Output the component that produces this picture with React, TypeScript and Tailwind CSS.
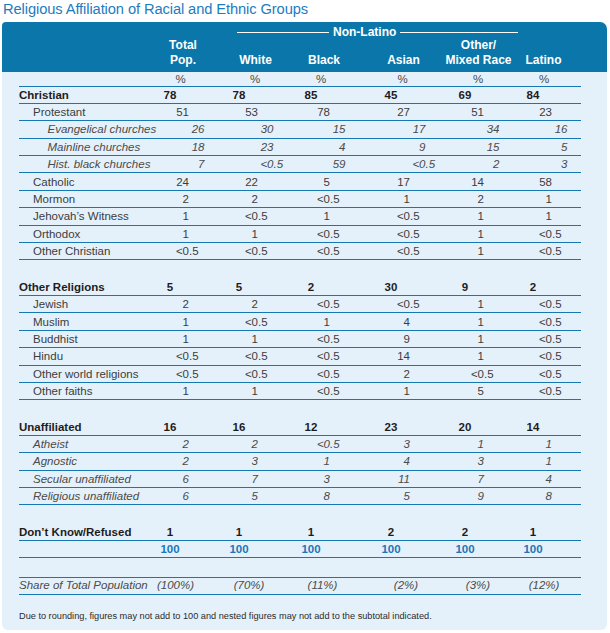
import React from "react";

type Kind = "section" | "sub" | "subItal" | "ital" | "total" | "gap";

type Row = {
  label?: string;
  kind: Kind;
  values?: string[];
};

const rows: Row[] = [
  { label: "Christian", kind: "section", values: ["78", "78", "85", "45", "69", "84"] },
  { label: "Protestant", kind: "sub", values: ["51", "53", "78", "27", "51", "23"] },
  { label: "Evangelical churches", kind: "subItal", values: ["26", "30", "15", "17", "34", "16"] },
  { label: "Mainline churches", kind: "subItal", values: ["18", "23", "4", "9", "15", "5"] },
  { label: "Hist. black churches", kind: "subItal", values: ["7", "<0.5", "59", "<0.5", "2", "3"] },
  { label: "Catholic", kind: "sub", values: ["24", "22", "5", "17", "14", "58"] },
  { label: "Mormon", kind: "sub", values: ["2", "2", "<0.5", "1", "2", "1"] },
  { label: "Jehovah’s Witness", kind: "sub", values: ["1", "<0.5", "1", "<0.5", "1", "1"] },
  { label: "Orthodox", kind: "sub", values: ["1", "1", "<0.5", "<0.5", "1", "<0.5"] },
  { label: "Other Christian", kind: "sub", values: ["<0.5", "<0.5", "<0.5", "<0.5", "1", "<0.5"] },
  { kind: "gap" },
  { label: "Other Religions", kind: "section", values: ["5", "5", "2", "30", "9", "2"] },
  { label: "Jewish", kind: "sub", values: ["2", "2", "<0.5", "<0.5", "1", "<0.5"] },
  { label: "Muslim", kind: "sub", values: ["1", "<0.5", "1", "4", "1", "<0.5"] },
  { label: "Buddhist", kind: "sub", values: ["1", "1", "<0.5", "9", "1", "<0.5"] },
  { label: "Hindu", kind: "sub", values: ["<0.5", "<0.5", "<0.5", "14", "1", "<0.5"] },
  { label: "Other world religions", kind: "sub", values: ["<0.5", "<0.5", "<0.5", "2", "<0.5", "<0.5"] },
  { label: "Other faiths", kind: "sub", values: ["1", "1", "<0.5", "1", "5", "<0.5"] },
  { kind: "gap" },
  { label: "Unaffiliated", kind: "section", values: ["16", "16", "12", "23", "20", "14"] },
  { label: "Atheist", kind: "ital", values: ["2", "2", "<0.5", "3", "1", "1"] },
  { label: "Agnostic", kind: "ital", values: ["2", "3", "1", "4", "3", "1"] },
  { label: "Secular unaffiliated", kind: "ital", values: ["6", "7", "3", "11", "7", "4"] },
  { label: "Religious unaffiliated", kind: "ital", values: ["6", "5", "8", "5", "9", "8"] },
  { kind: "gap" },
  { label: "Don’t Know/Refused", kind: "section", values: ["1", "1", "1", "2", "2", "1"] },
  { kind: "total", values: ["100", "100", "100", "100", "100", "100"] },
  { kind: "gap" },
];

const headers = [
  ["Total", "Pop."],
  ["White"],
  ["Black"],
  ["Asian"],
  ["Other/", "Mixed Race"],
  ["Latino"],
];

const shares = ["(100%)", "(70%)", "(11%)", "(2%)", "(3%)", "(12%)"];

// column cells, left edge sits 20px before the bold-number centre
const colW = ["w-[69px]", "w-[72px]", "w-[80px]", "w-[74px]", "w-[68px]", "w-[68px]"];
const headW = ["w-[66px]", "w-[73px]", "w-[66px]", "w-[65px]", "w-[67px]", "w-[61px]"];
const pctW = ["w-[61px]", "w-[72px]", "w-[60px]", "w-[63px]", "w-[66px]", "w-[62px]"];
const shareW = ["w-[51px]", "w-[60px]", "w-[63px]", "w-[70px]", "w-[66px]", "w-[62px]"];

const Decimal = ({ value, wide }: { value: string; wide?: boolean }) => {
  const dot = value.indexOf(".");
  const whole = dot === -1 ? value : value.slice(0, dot);
  const frac = dot === -1 ? "" : value.slice(dot);
  return (
    <div className="flex">
      <span className={`${wide ? "w-[54.5px]" : "w-[39px]"} shrink-0 text-right`}>{whole}</span>
      <span>{frac}</span>
    </div>
  );
};

const Cell = ({ kind, value }: { kind: Kind; value: string }) => {
  if (kind === "section") {
    return <div className="w-[40px] text-center font-bold text-[#1f1c1d]">{value}</div>;
  }
  if (kind === "total") {
    return <div className="w-[40px] text-center font-bold text-[#1a76b9]">{value}</div>;
  }
  if (kind === "subItal") {
    return (
      <div className="italic text-[#4a4a4a]">
        <Decimal value={value} wide />
      </div>
    );
  }
  if (kind === "ital") {
    return (
      <div className="italic text-[#4a4a4a]">
        <Decimal value={value} />
      </div>
    );
  }
  return (
    <div className="text-[#3c3c3c]">
      <Decimal value={value} />
    </div>
  );
};

const TableRow = ({ row }: { row: Row }) => {
  if (row.kind === "gap") return <div className="h-[18.2px]" />;

  let labelCls = "pl-[14px] text-[#3c3c3c]";
  if (row.kind === "section") labelCls = "font-bold text-[#1f1c1d]";
  if (row.kind === "subItal") labelCls = "pl-[28.5px] italic text-[#4a4a4a]";
  if (row.kind === "ital") labelCls = "pl-[14px] italic text-[#4a4a4a]";

  return (
    <div className="flex h-[17.4px] items-center border-b border-[#1677b3] pt-[1.5px]">
      <div className={`w-[131px] shrink-0 whitespace-nowrap ${labelCls}`}>{row.label}</div>
      {row.values?.map((v, i) => (
        <div key={i} className={`${colW[i]} shrink-0 whitespace-nowrap`}>
          <Cell kind={row.kind} value={v} />
        </div>
      ))}
    </div>
  );
};

const App: React.FC = () => {
  return (
    <div className="min-h-screen bg-white pl-[2px] font-['Liberation_Sans',Arial,sans-serif]">
      <h1 className="mb-[4px] pl-px text-[14.7px] leading-[18px] tracking-[-0.1px] text-[#1c7cbf]">
        Religious Affiliation of Racial and Ethnic Groups
      </h1>

      <div className="w-[605px] overflow-hidden rounded-tl-[4px] rounded-tr-[7px] rounded-b-[6px] bg-[#e5f1fa]">
        <div className="bg-[#0a76aa] pt-[4px] pb-[4px] pl-[17px] text-[12px] font-bold text-white">
          <div className="ml-[218px] flex h-[12px] items-center leading-none">
            <div className="h-px w-[92px] bg-white" />
            <span className="px-[4px]">Non-Latino</span>
            <div className="h-px w-[118px] bg-white" />
          </div>
          <div className="flex h-[30px] leading-[15px]">
            <div className="w-[131px] shrink-0" />
            {headers.map((h, i) => (
              <div key={i} className={`${colW[i]} flex shrink-0 flex-col justify-end`}>
                {h.map((line) => (
                  <div key={line} className={`${headW[i]} whitespace-nowrap text-center`}>
                    {line}
                  </div>
                ))}
              </div>
            ))}
          </div>
        </div>

        <div className="pl-[17px] text-[11.5px] leading-none">
          <div className="flex h-[14.5px] w-[562px] items-center border-b border-[#1677b3] pt-[1px] text-[#4a4a4a]">
            <div className="w-[131px] shrink-0" />
            {pctW.map((w, i) => (
              <div key={i} className={`${colW[i]} shrink-0`}>
                <div className={`${w} text-center`}>%</div>
              </div>
            ))}
          </div>

          <div className="w-[562px]">
            {rows.map((row, i) => (
              <TableRow key={i} row={row} />
            ))}

            <div className="flex h-[18px] items-center border-y border-[#1677b3] pt-[1px] italic text-[#4a4a4a]">
              <div className="w-[131px] shrink-0 whitespace-nowrap">Share of Total Population</div>
              {shares.map((s, i) => (
                <div key={i} className={`${colW[i]} shrink-0`}>
                  <div className={`${shareW[i]} text-center`}>{s}</div>
                </div>
              ))}
            </div>
          </div>

          <p className="pt-[16px] pb-[8px] text-[9.2px] leading-[11px] text-[#2b2b2b]">
            Due to rounding, figures may not add to 100 and nested figures may not add to the subtotal indicated.
          </p>
        </div>
      </div>
    </div>
  );
};

export default App;
